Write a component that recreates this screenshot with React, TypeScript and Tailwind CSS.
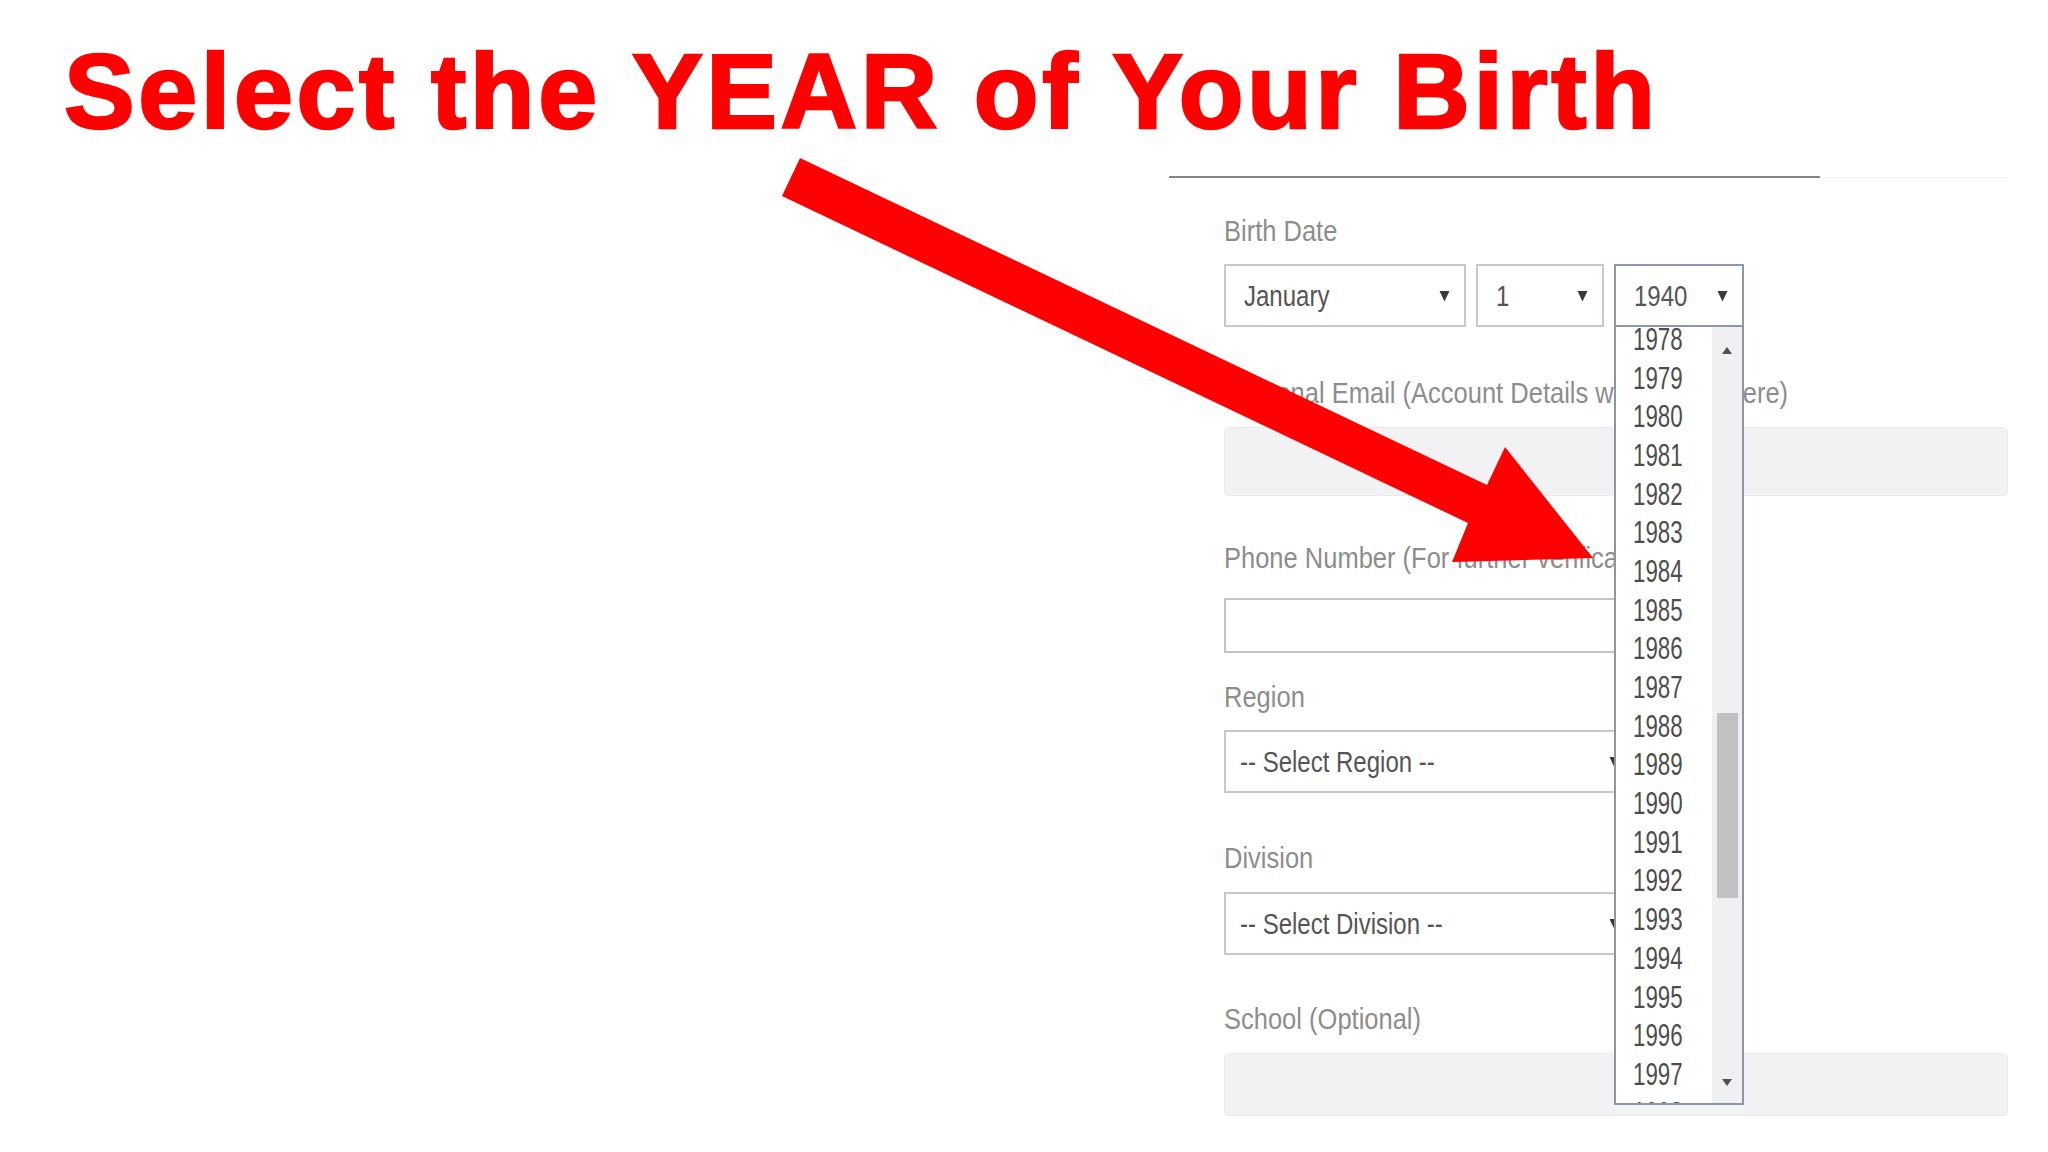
const sans = "font-['Liberation_Sans',Arial,sans-serif]";

const years = Array.from({ length: 21 }, (_, i) => 1978 + i);

function Caret({ className = "" }: { className?: string }) {
  return (
    <svg width="11" height="12" viewBox="0 0 11 12" className={className}>
      <polygon points="0.5,1 10.5,1 5.5,11.5" fill="#3a3a3a" />
    </svg>
  );
}

// the source screenshot is squeezed sideways, so texts get a horizontal squeeze too
function Squeeze({ children, amount }: { children: React.ReactNode; amount: "label" | "field" | "digit" }) {
  const cls =
    amount === "label" ? "scale-x-[0.85]" : amount === "field" ? "scale-x-[0.8]" : "scale-x-[0.72]";
  return <span className={`inline-block origin-left whitespace-nowrap ${cls}`}>{children}</span>;
}

function SelectBox({
  text,
  width,
  focused = false,
  children,
}: {
  text: string;
  width: string;
  focused?: boolean;
  children?: React.ReactNode;
}) {
  return (
    <div className={`relative ${width}`}>
      <div
        className={`flex h-[63px] items-center justify-between bg-white pl-[18px] pr-[14px] border-2 ${
          focused ? "border-[#8c98b2]" : "border-[#c9c9c9]"
        }`}
      >
        <span className="text-[30px] leading-none text-[#555]">
          <Squeeze amount="field">{text}</Squeeze>
        </span>
        <Caret />
      </div>
      {children}
    </div>
  );
}

function Label({ children, className = "" }: { children: React.ReactNode; className?: string }) {
  return (
    <div className={`h-[34px] text-[30px] leading-[34px] text-[#8d8d8d] ${className}`}>
      <Squeeze amount="label">{children}</Squeeze>
    </div>
  );
}

function YearDropdown() {
  return (
    <div className="absolute left-0 top-full z-10 flex h-[778px] w-[130px] border-2 border-t-0 border-[#8c96aa] bg-white">
      <div className="flex-1 overflow-hidden">
        <div className="-mt-[7px] flex flex-col">
          {years.map((y) => (
            <div
              key={y}
              className="flex h-[38.7px] shrink-0 items-center pl-[17px] text-[31px] leading-none text-[#4d4d4d]"
            >
              <Squeeze amount="digit">{y}</Squeeze>
            </div>
          ))}
        </div>
      </div>
      <div className="flex w-[30px] flex-col bg-[#f0f0f2]">
        <div className="flex h-[46px] items-center justify-center">
          <svg width="10" height="7" viewBox="0 0 10 7">
            <polygon points="5,0 10,7 0,7" fill="#505050" />
          </svg>
        </div>
        <div className="flex-1">
          <div className="mx-auto mt-[340px] h-[185px] w-[21px] bg-[#c1c1c1]" />
        </div>
        <div className="flex h-[42px] items-center justify-center">
          <svg width="10" height="7" viewBox="0 0 10 7">
            <polygon points="0,0 10,0 5,7" fill="#505050" />
          </svg>
        </div>
      </div>
    </div>
  );
}

export default function App() {
  return (
    <div className={`relative h-[1152px] w-[2048px] overflow-hidden bg-white ${sans}`}>
      {/* heading */}
      <div className="h-[176px] pl-[64px] pt-[38px]">
        <h1 className="whitespace-nowrap text-[106px] font-bold leading-none tracking-[3.6px] text-[#ff0000] [-webkit-text-stroke:2.5px_#ff0000]">
          Select the YEAR of Your Birth
        </h1>
      </div>

      {/* form */}
      <div className="ml-[1169px] w-[839px]">
        <div className="flex items-center">
          <div className="h-[2px] w-[651px] bg-[#858585]" />
          <div className="ml-[5px] h-[1px] flex-1 bg-[#efefef]" />
        </div>

        <div className="pl-[55px]">
          <Label className="mt-[36px]">Birth Date</Label>
          <div className="mt-[16px] flex gap-[10px]">
            <SelectBox text="January" width="w-[242px]" />
            <SelectBox text="1" width="w-[128px]" />
            <SelectBox text="1940" width="w-[130px]" focused>
              <YearDropdown />
            </SelectBox>
          </div>

          <Label className="mt-[49px]">Personal Email (Account Details will be sent here)</Label>
          <div className="mt-[17px] h-[69px] rounded-[5px] border border-[#ebebed] bg-[#f2f2f4]" />

          <Label className="mt-[45px]">Phone Number (For further verification)</Label>
          <div className="mt-[23px] h-[55px] w-[420px] border-2 border-[#c4c4c4] bg-white" />

          <Label className="mt-[27px]">Region</Label>
          <div className="mt-[16px] w-[412px]">
            <div className="flex h-[63px] items-center justify-between border-2 border-[#c9c9c9] pl-[14px] pr-[14px]">
              <span className="text-[30px] leading-none text-[#555]">
                <Squeeze amount="field">-- Select Region --</Squeeze>
              </span>
              <Caret />
            </div>
          </div>

          <Label className="mt-[48px]">Division</Label>
          <div className="mt-[17px] w-[412px]">
            <div className="flex h-[63px] items-center justify-between border-2 border-[#c9c9c9] pl-[14px] pr-[14px]">
              <span className="text-[30px] leading-none text-[#555]">
                <Squeeze amount="field">-- Select Division --</Squeeze>
              </span>
              <Caret />
            </div>
          </div>

          <Label className="mt-[47px]">School (Optional)</Label>
          <div className="mt-[17px] h-[63px] rounded-[5px] border border-[#ebebed] bg-[#f2f2f4]" />
        </div>
      </div>

      {/* red pointer arrow */}
      <svg
        className="pointer-events-none absolute left-0 top-0 z-20"
        width="2048"
        height="1152"
        viewBox="0 0 2048 1152"
      >
        <polygon
          points="800,158 1487,485 1505,447 1593,558 1452,562 1468,523 782,196"
          fill="#ff0000"
        />
      </svg>
    </div>
  );
}
